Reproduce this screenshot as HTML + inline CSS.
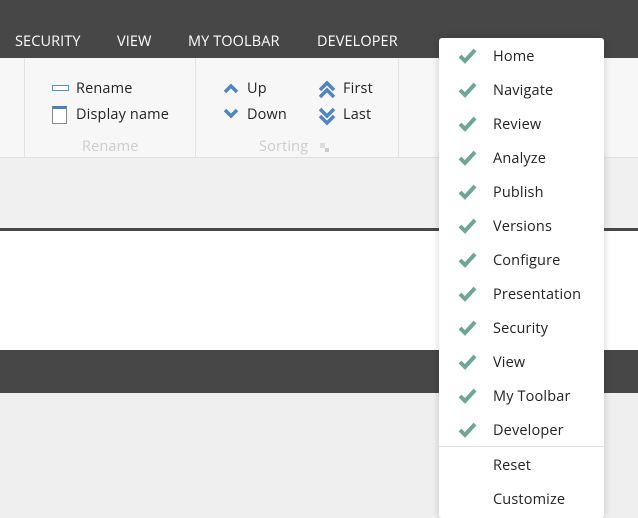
<!DOCTYPE html>
<html><head><style>
*{margin:0;padding:0;box-sizing:border-box}
body{width:638px;height:514px;overflow:hidden;background:#efefef;font-family:"Open Sans","Liberation Sans",sans-serif;position:relative}
.abs{position:absolute}
.tab{position:absolute;top:32px;color:#fff;font-size:14.5px;letter-spacing:0.1px}
.rt{position:absolute;font-size:14.5px;letter-spacing:0.15px;color:#222}
.menu{position:absolute;left:439px;top:38px;width:165px;height:480px;background:#fff;border-radius:3px;box-shadow:0 0 8px rgba(0,0,0,.18)}
.it{position:absolute;left:54px;font-size:14.5px;letter-spacing:0.15px;color:#222}
.ck{position:absolute;left:19px}
</style></head><body>
<div class="abs" style="left:0;top:0;width:638px;height:58px;background:#474747"></div>
<div class="tab" style="left:15px">SECURITY</div>
<div class="tab" style="left:117px">VIEW</div>
<div class="tab" style="left:188px">MY TOOLBAR</div>
<div class="tab" style="left:317px">DEVELOPER</div>
<div class="abs" style="left:0;top:58px;width:638px;height:100px;background:#f7f7f7;border-bottom:1px solid #e2e2e2"></div>
<div class="abs" style="left:24px;top:58px;width:1px;height:100px;background:#e2e2e2"></div>
<div class="abs" style="left:195px;top:58px;width:1px;height:100px;background:#e2e2e2"></div>
<div class="abs" style="left:398px;top:58px;width:1px;height:100px;background:#e2e2e2"></div>
<div class="abs" style="left:0;top:159px;width:638px;height:69px;background:#f0f0f0"></div>
<div class="abs" style="left:0;top:228px;width:638px;height:3px;background:#474747"></div>
<div class="abs" style="left:0;top:231px;width:638px;height:119px;background:#fff"></div>
<div class="abs" style="left:0;top:350px;width:638px;height:43px;background:#474747"></div>
<div class="abs" style="left:52px;top:85px;width:17px;height:6px;border:1px solid #5b8ec4;background:#fff"></div>
<div class="abs" style="left:52px;top:106px;width:15px;height:18px;border:1px solid #888;border-top:3px solid #4a7fb8;background:#fff"></div>
<div class="rt" style="left:76px;top:79px">Rename</div>
<div class="rt" style="left:76px;top:105px">Display name</div>
<div class="rt" style="left:82px;top:137px;color:#ccc">Rename</div>
<svg class="abs" style="left:223px;top:82px" width="16" height="40"><path d="M2 10 L8 4 L14 10" stroke="#4e86c2" stroke-width="3.5" fill="none"/><path d="M2 28 L8 34 L14 28" stroke="#4e86c2" stroke-width="3.5" fill="none"/></svg>
<svg class="abs" style="left:318px;top:80px" width="18" height="46"><path d="M2 10 L9 3 L16 10 M2 17 L9 10 L16 17" stroke="#4e86c2" stroke-width="3.5" fill="none"/><path d="M2 29 L9 36 L16 29 M2 36 L9 43 L16 36" stroke="#4e86c2" stroke-width="3.5" fill="none"/></svg>
<div class="rt" style="left:247px;top:79px">Up</div>
<div class="rt" style="left:247px;top:105px">Down</div>
<div class="rt" style="left:343px;top:79px">First</div>
<div class="rt" style="left:343px;top:105px">Last</div>
<div class="rt" style="left:259px;top:137px;color:#ccc">Sorting</div>
<div class="abs" style="left:320px;top:143px;width:5px;height:5px;background:#ddd"></div>
<div class="abs" style="left:325px;top:148px;width:4px;height:4px;background:#ccc"></div>
<div class="menu">
<div class="it" style="top:9px">Home</div>
<div class="it" style="top:43px">Navigate</div>
<div class="it" style="top:77px">Review</div>
<div class="it" style="top:111px">Analyze</div>
<div class="it" style="top:145px">Publish</div>
<div class="it" style="top:179px">Versions</div>
<div class="it" style="top:213px">Configure</div>
<div class="it" style="top:247px">Presentation</div>
<div class="it" style="top:281px">Security</div>
<div class="it" style="top:315px">View</div>
<div class="it" style="top:349px">My Toolbar</div>
<div class="it" style="top:383px">Developer</div>
<div class="abs" style="left:0;top:408px;width:165px;height:1px;background:#e2e2e2"></div>
<div class="it" style="top:418px">Reset</div>
<div class="it" style="top:452px">Customize</div>
<svg class="ck" style="top:0" width="20" height="410">
<g stroke="#6fa597" stroke-width="4" fill="none">
<path d="M2 18 L7 23 L17 12"/><path d="M2 52 L7 57 L17 46"/><path d="M2 86 L7 91 L17 80"/><path d="M2 120 L7 125 L17 114"/><path d="M2 154 L7 159 L17 148"/><path d="M2 188 L7 193 L17 182"/><path d="M2 222 L7 227 L17 216"/><path d="M2 256 L7 261 L17 250"/><path d="M2 290 L7 295 L17 284"/><path d="M2 324 L7 329 L17 318"/><path d="M2 358 L7 363 L17 352"/><path d="M2 392 L7 397 L17 386"/>
</g></svg>
</div>
</body></html>
